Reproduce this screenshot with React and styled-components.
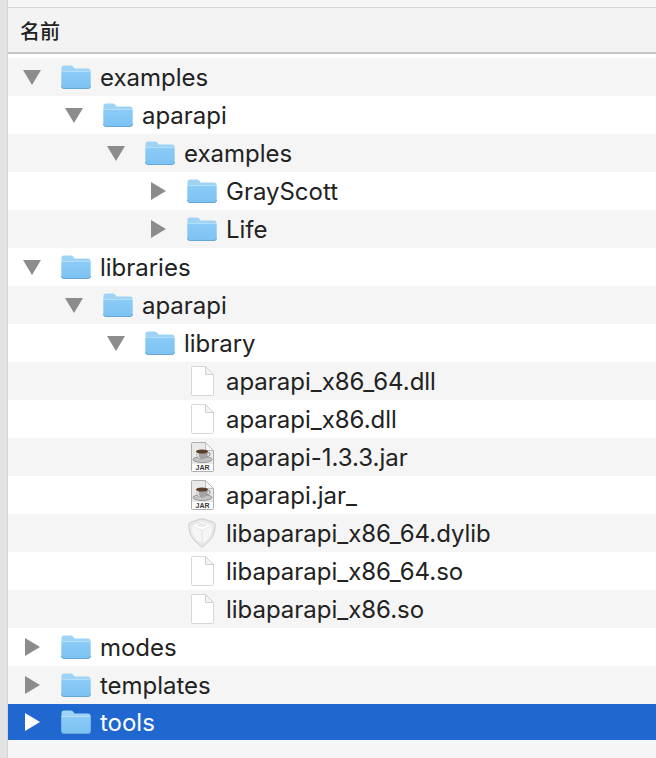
import styled, { createGlobalStyle } from "styled-components";

const GlobalStyle = createGlobalStyle`
  html, body {
    margin: 0;
    padding: 0;
    background: #f6f6f6;
  }
`;

// ====== STYLED COMPONENTS ======
const Page = styled.div`
  width: 656px;
  height: 758px;
  overflow: hidden;
  display: flex;
  background: #f6f6f6;
  font-family: "Inter", "Liberation Sans", "Noto Sans CJK SC", sans-serif;
`;

const SideEdge = styled.div`
  width: 7px;
  flex: none;
  background: #e3e3e3;
  border-right: 1px solid #d4d4d4;
`;

const Main = styled.div`
  flex: 1;
  min-width: 0;
  padding-top: 7px;
`;

const Header = styled.div`
  height: 44px;
  display: flex;
  align-items: center;
  padding-left: 12px;
  background: #f3f3f3;
  border-top: 1px solid #d6d6d6;
  border-bottom: 2px solid #c6c6c6;
  font-family: "Noto Sans CJK SC", sans-serif;
  font-size: 20px;
  font-weight: 500;
  color: #222;
`;

const List = styled.div`
  padding-top: 4px;
  background: #fff;
`;

const Row = styled.div`
  height: 38px;
  display: flex;
  align-items: center;
  padding-left: ${({ $depth }) => 14 + $depth * 42}px;
  background: ${({ $selected, $odd }) =>
    $selected ? "#2068d0" : $odd ? "#fff" : "#f5f5f5"};
  color: ${({ $selected }) => ($selected ? "#fff" : "#222")};
`;

const LastRow = styled(Row)`
  height: 36px;
`;

const TwistySlot = styled.div`
  width: 39px;
  flex: none;
  display: flex;
  align-items: center;
  padding-left: 1px;
  box-sizing: border-box;
`;

const IconSlot = styled.div`
  width: 30px;
  height: 30px;
  flex: none;
  display: flex;
  align-items: center;
  justify-content: center;
`;

const Name = styled.span`
  margin-left: 9px;
  font-size: 24px;
  letter-spacing: -0.02px;
  line-height: 40px;
  height: 38px;
  white-space: nowrap;
`;

const Tail = styled.div`
  height: 18px;
  background: #f6f6f6;
`;

// ====== ICONS ======
function Twisty({ open, selected }) {
  const fill = selected ? "#fff" : "#8c8c8c";
  return (
    <svg width="18" height="18" viewBox="0 0 18 18">
      {open ? (
        <polygon points="0,2 18,2 9,17" fill={fill} />
      ) : (
        <polygon points="2,0 17,9 2,18" fill={fill} />
      )}
    </svg>
  );
}

function FolderIcon({ id }) {
  return (
    <svg width="30" height="24" viewBox="0 0 30 24">
      <defs>
        <linearGradient id={id} x1="0" y1="0" x2="0" y2="1">
          <stop offset="0" stopColor="#8bcbf6" />
          <stop offset="1" stopColor="#7cc2f3" />
        </linearGradient>
      </defs>
      <path
        d="M0.5 3 Q0.5 0.5 3 0.5 H10 Q11.5 0.5 12.5 2 L13.5 3.5 H27 Q29.5 3.5 29.5 6 V21 Q29.5 23.5 27 23.5 H3 Q0.5 23.5 0.5 21 Z"
        fill="#9fd3f5"
      />
      <path d="M0.5 6.5 H29.5" stroke="#b4dff8" strokeWidth="1" />
      <path
        d="M0.5 7 H29.5 V21 Q29.5 23.5 27 23.5 H3 Q0.5 23.5 0.5 21 Z"
        fill={`url(#${id})`}
      />
      <path
        d="M0.5 21 Q0.5 23.5 3 23.5 H27 Q29.5 23.5 29.5 21"
        fill="none"
        stroke="#66a7d6"
        strokeWidth="1"
      />
    </svg>
  );
}

function FileIcon() {
  return (
    <svg width="24" height="30" viewBox="0 0 24 30">
      <path
        d="M1.5 1.5 Q1.5 0.5 2.5 0.5 H15.5 L23.5 8.5 V28.5 Q23.5 29.5 22.5 29.5 H2.5 Q1.5 29.5 1.5 28.5 Z"
        fill="#fff"
        stroke="#d6d6d6"
      />
      <path d="M15.5 0.5 V8.5 H23.5 Z" fill="#f3f3f3" stroke="#d0d0d0" />
    </svg>
  );
}

function JarIcon() {
  return (
    <svg width="24" height="30" viewBox="0 0 24 30">
      <path
        d="M1.5 1.5 Q1.5 0.5 2.5 0.5 H15.5 L23.5 8.5 V28.5 Q23.5 29.5 22.5 29.5 H2.5 Q1.5 29.5 1.5 28.5 Z"
        fill="#e9e9e9"
        stroke="#aeaeae"
      />
      <path d="M15.5 0.5 V8.5 H23.5 Z" fill="#f6f6f6" stroke="#bdbdbd" />
      <rect x="2" y="22" width="21" height="7" fill="#fff" />
      <ellipse cx="12.5" cy="17.5" rx="9.5" ry="3" fill="#c4c4c4" stroke="#777" strokeWidth="0.7" />
      <path d="M6 9.5 H18 Q18 17.5 12 17.5 Q6 17.5 6 9.5 Z" fill="#a3a3a3" />
      <path d="M6 9.5 Q6.5 15 10 17 Q8 12 9 9.5 Z" fill="#e2e2e2" />
      <path d="M18 10.5 Q21 10.5 20 13 Q19 14.5 16.5 15" fill="none" stroke="#888" strokeWidth="1" />
      <ellipse cx="12" cy="9.5" rx="6" ry="2" fill="#5b3f2a" />
      <text
        x="12.5"
        y="28.2"
        textAnchor="middle"
        fontSize="7"
        fontWeight="700"
        fontFamily="Liberation Sans, sans-serif"
        fill="#3a3a3a"
      >
        JAR
      </text>
    </svg>
  );
}

function DylibIcon() {
  return (
    <svg width="32" height="32" viewBox="0 0 32 32">
      <path
        d="M2 7 Q2 5.5 4 4.5 L14 1.2 Q16 0.7 18 1.2 L28 4.5 Q30 5.5 30 7 Q30 17 25 23 Q21 27 17 30.5 Q16 31 15 30.5 Q11 27 7 23 Q2 17 2 7 Z"
        fill="#e9e9e9"
        stroke="#c8c8c8"
      />
      <path d="M5 8 L16 3.5 L27 8 Q27 17 22.5 22 Q19.5 25 16 27.5 Q12.5 25 9.5 22 Q5 17 5 8 Z" fill="#f6f6f6" />
      <path d="M5 8 L16 13 L27 8 L16 3.5 Z" fill="#fdfdfd" stroke="#e2e2e2" strokeWidth="0.7" />
      <path d="M16 13 V27" stroke="#dedede" strokeWidth="1" />
      <ellipse cx="16" cy="7.5" rx="5" ry="2.2" fill="#ebebeb" />
    </svg>
  );
}

// ====== DATA ======
const items = [
  { name: "examples", depth: 0, type: "folder", open: true },
  { name: "aparapi", depth: 1, type: "folder", open: true },
  { name: "examples", depth: 2, type: "folder", open: true },
  { name: "GrayScott", depth: 3, type: "folder", open: false },
  { name: "Life", depth: 3, type: "folder", open: false },
  { name: "libraries", depth: 0, type: "folder", open: true },
  { name: "aparapi", depth: 1, type: "folder", open: true },
  { name: "library", depth: 2, type: "folder", open: true },
  { name: "aparapi_x86_64.dll", depth: 3, type: "file" },
  { name: "aparapi_x86.dll", depth: 3, type: "file" },
  { name: "aparapi-1.3.3.jar", depth: 3, type: "jar" },
  { name: "aparapi.jar_", depth: 3, type: "jar" },
  { name: "libaparapi_x86_64.dylib", depth: 3, type: "dylib" },
  { name: "libaparapi_x86_64.so", depth: 3, type: "file" },
  { name: "libaparapi_x86.so", depth: 3, type: "file" },
  { name: "modes", depth: 0, type: "folder", open: false },
  { name: "templates", depth: 0, type: "folder", open: false },
  { name: "tools", depth: 0, type: "folder", open: false, selected: true },
];

function ItemIcon({ type, id }) {
  if (type === "folder") return <FolderIcon id={id} />;
  if (type === "jar") return <JarIcon />;
  if (type === "dylib") return <DylibIcon />;
  return <FileIcon />;
}

// ====== COMPONENTE ======
export default function App() {
  return (
    <Page>
      <GlobalStyle />
      <SideEdge />
      <Main>
        <Header>名前</Header>
        <List>
          {items.map((item, i) => {
            const RowKind = item.selected ? LastRow : Row;
            return (
              <RowKind
                key={i}
                $depth={item.depth}
                $odd={i % 2 === 1}
                $selected={item.selected}
              >
                <TwistySlot>
                  {item.type === "folder" && (
                    <Twisty open={item.open} selected={item.selected} />
                  )}
                </TwistySlot>
                <IconSlot>
                  <ItemIcon type={item.type} id={`folder-${i}`} />
                </IconSlot>
                <Name>{item.name}</Name>
              </RowKind>
            );
          })}
        </List>
        <Tail />
      </Main>
    </Page>
  );
}
